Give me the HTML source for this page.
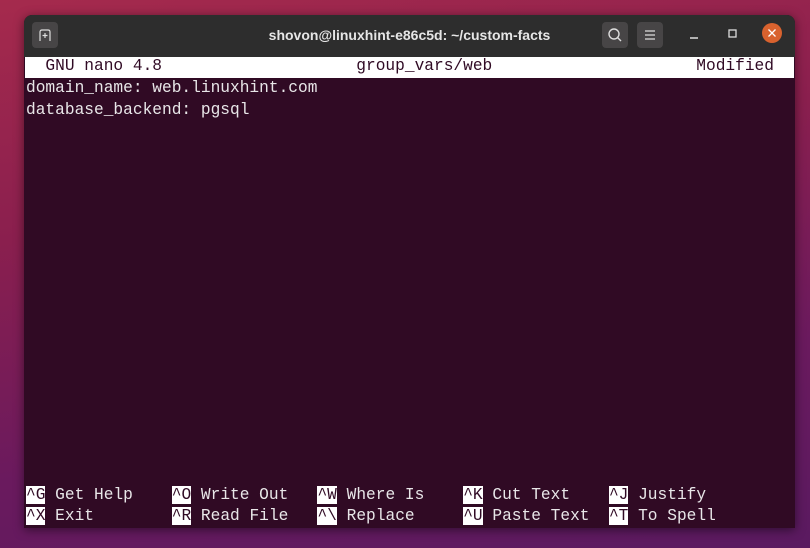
<!DOCTYPE html>
<html><head><meta charset="utf-8"><style>
html,body{margin:0;padding:0;width:810px;height:548px;overflow:hidden}
body{background:linear-gradient(170deg,#a52a4d 0%,#8a1f4e 35%,#6a1a5e 70%,#5a1a60 100%);position:relative;font-family:"Liberation Mono",monospace}
.win{position:absolute;left:24px;top:15px;width:771px;height:513px;background:#300a24;border-radius:8px 8px 0 0;overflow:hidden;box-shadow:0 2px 10px rgba(0,0,0,.5)}
.tb{position:absolute;left:0;top:0;width:771px;height:42px;background:#2d2d2d}
.title{position:absolute;left:0;right:0;top:12px;text-align:center;color:#e6e6e6;font:bold 14px "Liberation Sans",sans-serif}
.btn{position:absolute;top:7px;width:26px;height:26px;background:#474546;border-radius:4px}
.t{position:absolute;left:2px;font-size:16.2px;line-height:21.5px;color:#e8e6e8;white-space:pre}
.bar{position:absolute;left:1px;top:42px;width:769px;height:21px;background:#fff;color:#300a24}
.k{background:#fff;color:#300a24}
</style></head><body>
<div class="win">
 <div class="tb">
  <div class="btn" style="left:8px"><svg width="26" height="26"><path d="M8 19V10q0-2 2-2h6q2 0 2 2v9" fill="none" stroke="#ddd" stroke-width="1.2"/><path d="M13 11v5M10.5 13.5h5" stroke="#ddd" stroke-width="1.2"/></svg></div>
  <div class="title">shovon@linuxhint-e86c5d: ~/custom-facts</div>
  <div class="btn" style="left:578px"><svg width="26" height="26"><circle cx="12" cy="12" r="5" fill="none" stroke="#ddd" stroke-width="1.4"/><path d="M15.5 15.5l3.5 3.5" stroke="#ddd" stroke-width="1.4"/></svg></div>
  <div class="btn" style="left:613px"><svg width="26" height="26"><path d="M8 9h10M8 13h10M8 17h10" stroke="#ddd" stroke-width="1.2"/></svg></div>
  <svg style="position:absolute;left:660px;top:2px" width="100" height="36"><path d="M6 21h8" stroke="#ddd" stroke-width="1.4"/><rect x="45" y="13" width="7" height="7" fill="none" stroke="#ddd" stroke-width="1.3"/><circle cx="88" cy="16" r="10" fill="#d9622e"/><path d="M84.5 12.5l7 7M91.5 12.5l-7 7" stroke="#fff" stroke-width="1.3"/></svg>
 </div>
 <div class="bar"><div class="t" style="top:-1px;left:1px;color:#300a24">  GNU nano 4.8                    group_vars/web                     Modified</div></div>
 <div class="t" style="top:63px">domain_name: web.linuxhint.com</div>
 <div class="t" style="top:84.5px">database_backend: pgsql</div>
 <div class="t" style="top:470px"><span class="k">^G</span> Get Help    <span class="k">^O</span> Write Out   <span class="k">^W</span> Where Is    <span class="k">^K</span> Cut Text    <span class="k">^J</span> Justify</div>
 <div class="t" style="top:491px"><span class="k">^X</span> Exit        <span class="k">^R</span> Read File   <span class="k">^\</span> Replace     <span class="k">^U</span> Paste Text  <span class="k">^T</span> To Spell</div>
</div>
</body></html>
